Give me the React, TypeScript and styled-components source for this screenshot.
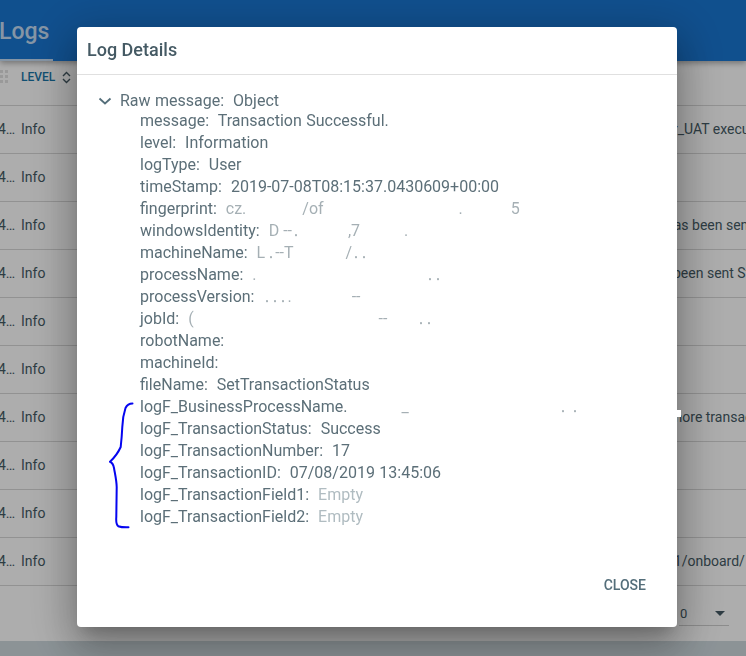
import React from "react";
import styled, { createGlobalStyle } from "styled-components";

const Global = createGlobalStyle`
  html, body { margin: 0; padding: 0; }
  body {
    width: 746px; height: 656px; overflow: hidden;
    background: #ced9de;
    font-family: Roboto, "Liberation Sans", sans-serif;
    color: #455a64;
  }
`;

const Page = styled.div`
  width: 746px; height: 656px; overflow: hidden;
  display: flex; flex-direction: column;
`;
const Header = styled.header`
  height: 61px; flex: none; background: #1976d2;
  display: flex; align-items: flex-end;
  box-shadow: 0 2px 6px rgba(0,0,0,.35);
  position: relative;
`;
const Tab = styled.div`
  width: 53px; height: 61px; box-sizing: border-box;
  padding-top: 17px; text-indent: -1px;
  font-size: 23px; line-height: 30px; font-weight: 500;
  color: rgba(255,255,255,.75); border-bottom: 2px solid rgba(255,255,255,.75);
  white-space: nowrap;
`;
const Table = styled.section`
  background: #fff; height: 580px; flex: none;
  display: flex; flex-direction: column;
`;
const HeadRow = styled.div`
  height: 45px; flex: none; box-sizing: border-box;
  border-bottom: 1px solid #d8d8d8;
  padding-bottom: 12px;
  display: flex; align-items: center; gap: 7px;
  font-size: 12px; font-weight: 500; color: #1976a8;
`;
const DragDots = styled.svg`
  flex: none; margin-right: 6px;
`;
const Row = styled.div`
  height: 48px; flex: none; box-sizing: border-box;
  border-bottom: 1px solid #d8d8d8;
  padding-bottom: 2px;
  display: flex; align-items: center;
  font-size: 14px; white-space: nowrap; overflow: hidden;
`;
const TimeCell = styled.span`
  width: 21px; flex: none; text-indent: -2px; overflow: hidden;
`;
const LevelCell = styled.span`
  flex: none; width: 40px;
`;
const MessageCell = styled.span<{ $start: number }>`
  margin-left: ${(p) => p.$start - 61}px;
`;
const Footer = styled.footer`
  height: 55px; display: flex; justify-content: flex-end;
  padding-right: 17px; align-items: flex-start; padding-top: 16px;
`;
const PageSelect = styled.div`
  width: 50px; height: 24px; box-sizing: border-box;
  border-bottom: 1px solid #cfcfcf;
  display: flex; justify-content: space-between; align-items: center;
  font-size: 13px; padding: 0 3px 0 1px;
`;
const Caret = styled.span`
  width: 0; height: 0; margin-right: 1px;
  border-left: 5px solid transparent; border-right: 5px solid transparent;
  border-top: 5px solid #455a64;
`;
const Overlay = styled.div`
  position: fixed; inset: 0; background: rgba(0,0,0,.32);
  padding: 27px 0 0 77px;
`;
const Dialog = styled.div`
  width: 600px; height: 600px; background: #fff; border-radius: 4px;
  position: relative;
  display: flex; flex-direction: column;
  box-shadow: 0 11px 15px -7px rgba(0,0,0,.2), 0 24px 38px 3px rgba(0,0,0,.14), 0 9px 46px 8px rgba(0,0,0,.22);
`;
const Title = styled.h2`
  margin: 0; height: 47px; flex: none;
  border-bottom: 1px solid #e0e0e0;
  padding: 0 10px;
  font-size: 18px; font-weight: 500; line-height: 46px; color: #455a64;
`;
const Tree = styled.div`
  flex: 1; padding: 16px 0 0 20px;
  font-size: 16px; line-height: 22px; color: #5c6f78; word-spacing: .5px;
`;
const Root = styled.div`
  display: flex; align-items: center; height: 19px; white-space: pre;
  svg { flex: none; margin-right: 7px; }
`;
const Entry = styled.div`
  padding-left: 43px; height: 22px; white-space: pre; display: flex;
`;
const Muted = styled.span`
  color: #b0bcc1;
`;
const Scrap = styled.span<{ $gap: number }>`
  margin-left: ${(p) => p.$gap}px; opacity: .55;
  display: inline-block;
`;
const Actions = styled.div`
  display: flex; justify-content: flex-end; padding: 0 31px 33px 0;
`;
const CloseButton = styled.button`
  border: 0; background: none; padding: 0;
  font: 500 14px/18px Roboto, sans-serif; color: #546e7a;
`;
const Brace = styled.svg`
  position: absolute; left: 29px; top: 373px;
`;
const EraseMark = styled.span`
  position: absolute; left: 600px; top: 383px;
  width: 4px; height: 7px; background: #fff;
`;

const rows: [string, number][] = [
  ["r_UAT execution", 673],
  ["", 0],
  ["has been sent", 666],
  ["been sent Status", 673],
  ["", 0],
  ["", 0],
  ["more transaction", 670],
  ["", 0],
  ["", 0],
  ["v1/onboard/", 667],
];

const plain: [string, string][] = [
  ["message", "Transaction Successful."],
  ["level", "Information"],
  ["logType", "User"],
  ["timeStamp", "2019-07-08T08:15:37.0430609+00:00"],
];

const redacted: [string, [number, string][]][] = [
  ["fingerprint", [[0, "cz."], [56, "/of"], [135, "."], [48, "5"]]],
  ["windowsIdentity", [[0, "D"], [4, "\u2010\u2010\u2024"], [48, ",7"], [44, "."]]],
  ["machineName", [[0, "L"], [2, "\u2024\u2010\u2010T"], [52, "/\u2024\u2024"]]],
  ["processName", [[0, "."], [170, "\u2024\u2024"]]],
  ["processVersion", [[0, "\u2024\u2024\u2024."], [60, "\u2010\u2010"]]],
  ["jobId", [[0, "("], [185, "\u2010\u2010"], [30, "\u2024\u2024"]]],
];

const after: [string, string][] = [
  ["robotName", ""],
  ["machineId", ""],
  ["fileName", "SetTransactionStatus"],
];

const dots = [0, 1, 2].flatMap((r) => [0, 1].map((c) => [c, r]));

export default function App() {
  return (
    <Page>
      <Global />
      <Header><Tab>Logs</Tab></Header>
      <Table>
        <HeadRow>
          <DragDots width="8" height="14" viewBox="0 0 8 14" fill="#e2e2e2">
            {dots.map(([c, r]) => <rect key={`${c}${r}`} x={c * 5} y={r * 5} width="3" height="3" />)}
          </DragDots>
          <span>LEVEL</span>
          <svg width="9" height="13" viewBox="0 0 9 13" fill="none" stroke="#455a64" strokeWidth="1.4">
            <path d="M1 5l3.5-3.5L8 5M1 8l3.5 3.5L8 8" />
          </svg>
        </HeadRow>
        {rows.map(([text, start], i) => (
          <Row key={i}>
            <TimeCell>4…</TimeCell>
            <LevelCell>Info</LevelCell>
            {text && <MessageCell $start={start}>{text}</MessageCell>}
          </Row>
        ))}
        <Footer>
          <PageSelect><span>0</span><Caret /></PageSelect>
        </Footer>
      </Table>
      <Overlay>
        <Dialog>
          <Title>Log Details</Title>
          <Tree>
            <Root>
              <svg width="16" height="16" viewBox="0 0 16 16" fill="none" stroke="#546e7a" strokeWidth="1.8">
                <path d="M2.5 5.5L8 10.5l5.5-5" />
              </svg>
              {"Raw message:  Object"}
            </Root>
            {plain.map(([k, v]) => <Entry key={k}>{`${k}:  ${v}`}</Entry>)}
            {redacted.map(([k, parts]) => (
              <Entry key={k}>
                {`${k}:  `}
                {parts.map(([gap, s], i) => <Scrap key={i} $gap={gap}>{s}</Scrap>)}
              </Entry>
            ))}
            {after.map(([k, v]) => <Entry key={k}>{`${k}:  ${v}`}</Entry>)}
            <Entry>logF_BusinessProcessName.<Scrap $gap={54}>_</Scrap><Scrap $gap={150}>{"\u2024 \u2024"}</Scrap></Entry>
            <Entry>{"logF_TransactionStatus:  Success"}</Entry>
            <Entry>{"logF_TransactionNumber:  17"}</Entry>
            <Entry>{"logF_TransactionID:  07/08/2019 13:45:06"}</Entry>
            <Entry>{"logF_TransactionField1:  "}<Muted>Empty</Muted></Entry>
            <Entry>{"logF_TransactionField2:  "}<Muted>Empty</Muted></Entry>
          </Tree>
          <Actions><CloseButton>CLOSE</CloseButton></Actions>
          <Brace width="30" height="135" viewBox="106 400 30 135" fill="none" stroke="#0505f0" strokeWidth="2" strokeLinecap="round" strokeLinejoin="round">
            <path d="M132.5 403.5C129 403.5 127 405 125.5 408C123.5 414 122.5 420 122.3 427C122 433 121.5 440 120.7 447C118 453 114 458 110 461.7C112 462.5 113.5 465 114 468C115 474 116.5 480 116.7 487L116.3 517C116 521 116.5 525 118.3 526.2C121 527.3 125 527.4 128.5 527.3" />
          </Brace>
          <EraseMark />
        </Dialog>
      </Overlay>
    </Page>
  );
}
